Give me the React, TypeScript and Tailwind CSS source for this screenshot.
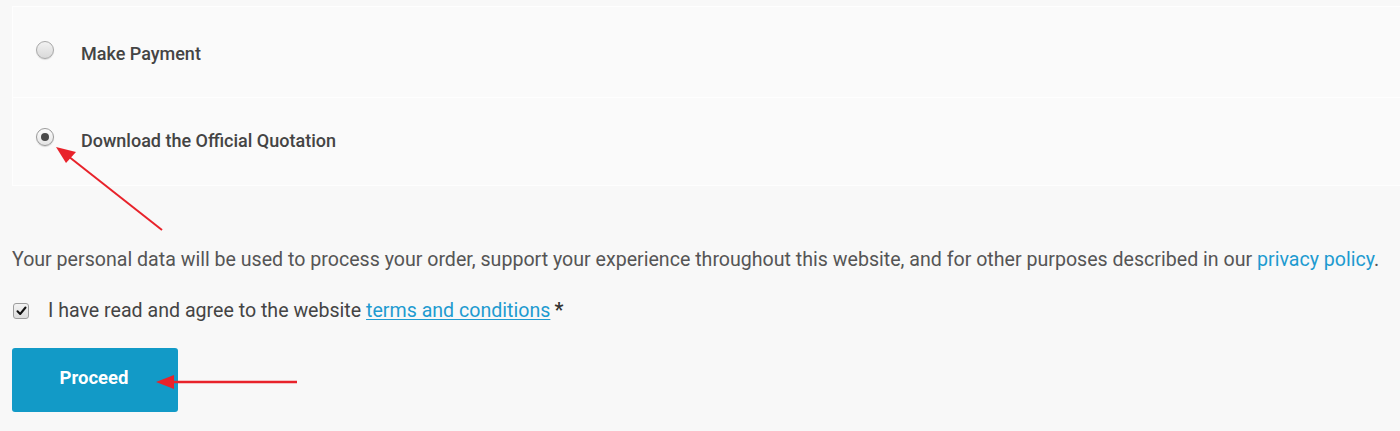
import { useState } from 'react';

const options = [
  { id: 'pay', label: 'Make Payment' },
  { id: 'quote', label: 'Download the Official Quotation' },
];

function Radio({ checked }: { checked: boolean }) {
  return checked ? (
    <span className="w-[18px] h-[18px] rounded-full border border-[#9a9a9a] bg-gradient-to-b from-[#fdfdfd] to-[#e4e4e4] shadow-[0_1px_1px_rgba(0,0,0,0.15)] flex items-center justify-center shrink-0">
      <span className="w-[8px] h-[8px] rounded-full bg-[#4a4a4a]" />
    </span>
  ) : (
    <span className="w-[18px] h-[18px] rounded-full border border-[#a8a8a8] bg-gradient-to-b from-[#f2f2f2] to-[#d9d9d9] shadow-[0_1px_1px_rgba(0,0,0,0.12)] shrink-0" />
  );
}

export default function App() {
  const [selected, setSelected] = useState('quote');
  const [agree, setAgree] = useState(true);

  return (
    <div className="relative w-[1400px] h-[431px] bg-[#f8f8f8] overflow-hidden font-['Roboto',sans-serif]">
      <div className="pl-3 pt-[6px]">
        {/* Payment options */}
        <div className="flex flex-col">
          {options.map((opt, i) => (
            <button
              key={opt.id}
              onClick={() => setSelected(opt.id)}
              className={
                i === 0
                  ? 'h-[92px] bg-[#fafafa] border border-r-0 border-[#fefefe] flex items-center pl-[23px] text-left'
                  : 'h-[88px] bg-[#fafafa] border border-r-0 border-t-0 border-[#fefefe] flex items-center pl-[23px] text-left'
              }
            >
              <span className={i === 0 ? 'flex items-center -mt-[5px]' : 'flex items-center -mt-[10px]'}>
                <Radio checked={selected === opt.id} />
                <span className="ml-[27px] mt-[8px] text-[18px] font-medium text-[#444]">{opt.label}</span>
              </span>
            </button>
          ))}
        </div>

        <p className="mt-[61px] text-[19.6px] text-[#555] leading-[26px]">
          Your personal data will be used to process your order, support your experience throughout this website, and for other purposes described in our{' '}
          <a className="text-[#1e9bd0]">privacy policy</a>.
        </p>

        <label className="mt-[25px] flex items-center" onClick={() => setAgree(!agree)}>
          <span className="w-[16px] h-[16px] ml-px rounded-[3px] border border-[#9d9d9d] bg-gradient-to-b from-[#f4f4f4] to-[#dcdcdc] flex items-center justify-center">
            {agree && (
              <svg width="11" height="10" viewBox="0 0 11 10">
                <path d="M1.5 5.2 L4.2 8 L9.5 1.5" fill="none" stroke="#111" strokeWidth="2" strokeLinecap="round" strokeLinejoin="round" />
              </svg>
            )}
          </span>
          <span className="ml-[19px] text-[19.6px] text-[#444] leading-[26px]">
            I have read and agree to the website <a className="text-[#1e9bd0] underline underline-offset-2">terms and conditions</a>
            <span className="ml-[4px] font-bold text-[#333]">*</span>
          </span>
        </label>

        <button className="mt-[24px] w-[166px] h-[64px] rounded-[3px] bg-[#129ac7] text-white text-[18.5px] font-bold flex items-center justify-center pb-[3px] pr-[2px]">
          Proceed
        </button>
      </div>

      {/* annotation arrows */}
      <svg className="absolute inset-0 pointer-events-none" width="1400" height="431">
        <line x1="162" y1="230" x2="68" y2="156" stroke="#e8222a" strokeWidth="2" />
        <polygon points="56,147 76,152 66,163" fill="#e8222a" />
        <line x1="297" y1="382" x2="172" y2="382" stroke="#e8222a" strokeWidth="2.5" />
        <polygon points="156,382 174,375 174,389" fill="#e8222a" />
      </svg>
    </div>
  );
}
